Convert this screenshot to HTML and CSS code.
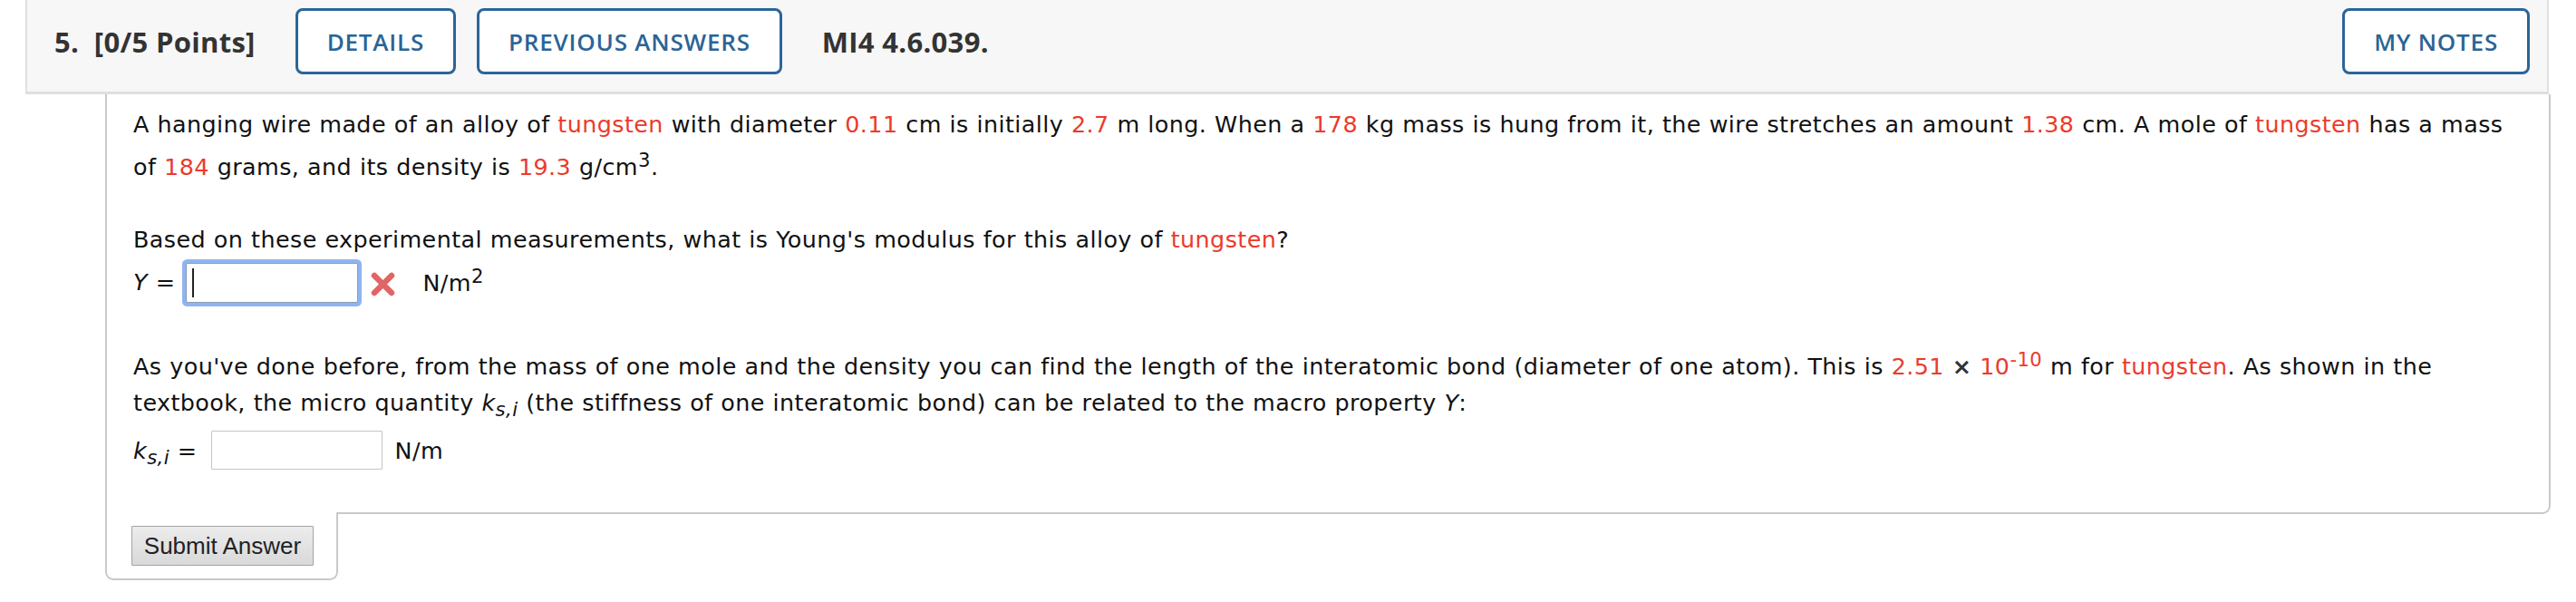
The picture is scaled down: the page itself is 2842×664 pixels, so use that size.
FILE: index.html
```html
<!DOCTYPE html>
<html lang="en">
<head>
<meta charset="utf-8">
<title>Question 5</title>
<link rel="stylesheet" href="styles.css">
</head>
<body>
<div class="q-header">
  <span class="q-num">5.&nbsp; [0/5 Points]</span>
  <button class="hbtn hbtn-details">DETAILS</button>
  <button class="hbtn hbtn-prev">PREVIOUS ANSWERS</button>
  <span class="q-code">MI4 4.6.039.</span>
  <span class="spacer"></span>
  <button class="hbtn hbtn-notes">MY NOTES</button>
</div>
<div class="q-body">
  <p class="para first">A hanging wire made of an alloy of <span class="red">tungsten</span> with diameter <span class="red">0.11</span> cm is initially <span class="red">2.7</span> m long. When a <span class="red">178</span> kg mass is hung from it, the wire stretches an amount <span class="red">1.38</span> cm. A mole of <span class="red">tungsten</span> has a mass of <span class="red">184</span> grams, and its density is <span class="red">19.3</span> g/cm<sup>3</sup>.</p>
  <p class="para gap">Based on these experimental measurements, what is Young's modulus for this alloy of <span class="red">tungsten</span>?</p>
  <div class="answer-line"><i>Y</i> =<span class="field-wrap"><input class="field focused" type="text" aria-label="Y"><span class="caret"></span></span><svg class="wrong" width="27" height="27" viewBox="0 0 27 27" aria-hidden="true"><path d="M4 4 L23 23 M23 4 L4 23" stroke="#e26464" stroke-width="6.5" stroke-linecap="round"/></svg><span class="unit-y">N/m<sup>2</sup></span></div>
  <p class="para gap2">As you've done before, from the mass of one mole and the density you can find the length of the interatomic bond (diameter of one atom). This is <span class="red">2.51</span> <span class="times">×</span> <span class="red">10<sup>-10</sup></span> m for <span class="red">tungsten</span>. As shown in the textbook, the micro quantity <i>k</i><sub><i>s,i</i></sub> (the stiffness of one interatomic bond) can be related to the macro property <i>Y</i>:</p>
  <div class="answer-line k-line"><i>k</i><sub><i>s,i</i></sub> =<input class="field field-k" type="text" aria-label="k"><span class="unit-k">N/m</span></div>
</div>
<div class="submit-tab">
  <button class="submit-btn">Submit Answer</button>
</div>
</body>
</html>
```
FILE: styles.css
```css
html, body {
  margin: 0;
  padding: 0;
  background: #ffffff;
}

body {
  font-family: "DejaVu Sans", Verdana, sans-serif;
  color: #111111;
}

.q-header {
  display: flex;
  align-items: center;
  margin: 0 30px 0 28px;
  padding: 9px 19px 19px 30px;
  background: #f7f7f7;
  border-left: 2px solid #e0e0e0;
  border-right: 2px solid #e0e0e0;
  border-bottom: 3px solid #dfdfdf;
  font-family: "Open Sans", "Liberation Sans", sans-serif;
}

.q-num,
.q-code {
  font-size: 31px;
  font-weight: 700;
  color: #333333;
  letter-spacing: 0.3px;
}

.q-num {
  margin-right: 44px;
}

.q-code {
  margin-left: 44px;
}

.spacer {
  flex: 1;
}

.hbtn {
  height: 73px;
  padding: 0 32px;
  border: 3px solid #2b6599;
  border-radius: 8px;
  background: #ffffff;
  color: #2a6496;
  font-family: "Open Sans", "Liberation Sans", sans-serif;
  font-size: 26px;
  font-weight: 600;
  letter-spacing: 0.8px;
}

.hbtn-prev {
  margin-left: 23px;
}

.q-body {
  margin: 0 28px 0 116px;
  padding: 13px 29px 40px 29px;
  border: 2px solid #c9c9c9;
  border-top: none;
  border-radius: 0 0 9px 0;
  font-size: 25.4px;
  line-height: 40px;
  letter-spacing: 0.42px;
  word-spacing: 0.3px;
}

.para {
  margin: 0;
}

.para.gap {
  margin-top: 40px;
}

.para.gap2 {
  margin-top: 43px;
}

.red {
  color: #ec3a2c;
}

.times {
  color: #333333;
  font-weight: 700;
}

.answer-line {
  margin: 0;
}

.k-line {
  margin-top: 3px;
}

.field-wrap {
  position: relative;
  display: inline-block;
  margin-left: 12px;
}

.field {
  box-sizing: border-box;
  width: 190px;
  height: 44px;
  padding: 0;
  margin: 0;
  border: 1px solid #a9a9a9;
  border-radius: 1px;
  background: #ffffff;
  font-family: "DejaVu Sans", Verdana, sans-serif;
  font-size: 25.4px;
}

.field.focused {
  border-color: #8d9cb5;
  box-shadow: 0 0 0 4px #8fb4f1;
  border-radius: 2px;
}

.caret {
  position: absolute;
  left: 7px;
  top: 6px;
  width: 2px;
  height: 32px;
  background: #222222;
}

.field-k {
  width: 189px;
  height: 43px;
  margin-left: 15px;
  border-color: #c4c4c4;
}

.wrong {
  vertical-align: middle;
  margin-left: 14px;
  margin-right: 30px;
}

.unit-k {
  margin-left: 14px;
}

sup {
  font-size: smaller;
  vertical-align: super;
}

sub {
  font-size: smaller;
  vertical-align: sub;
}

.submit-tab {
  width: 201px;
  margin: -2px 0 0 116px;
  padding: 15px 25px 14px 27px;
  background: #ffffff;
  border: 2px solid #c9c9c9;
  border-top: none;
  border-radius: 0 0 9px 9px;
}

.submit-btn {
  display: block;
  width: 201px;
  height: 44px;
  padding: 0;
  border: 1px solid #a4a4a4;
  border-radius: 1px;
  background: linear-gradient(#ececec, #d9d9d9);
  color: #222222;
  font-family: "Liberation Sans", Arial, sans-serif;
  font-size: 26px;
}
```
